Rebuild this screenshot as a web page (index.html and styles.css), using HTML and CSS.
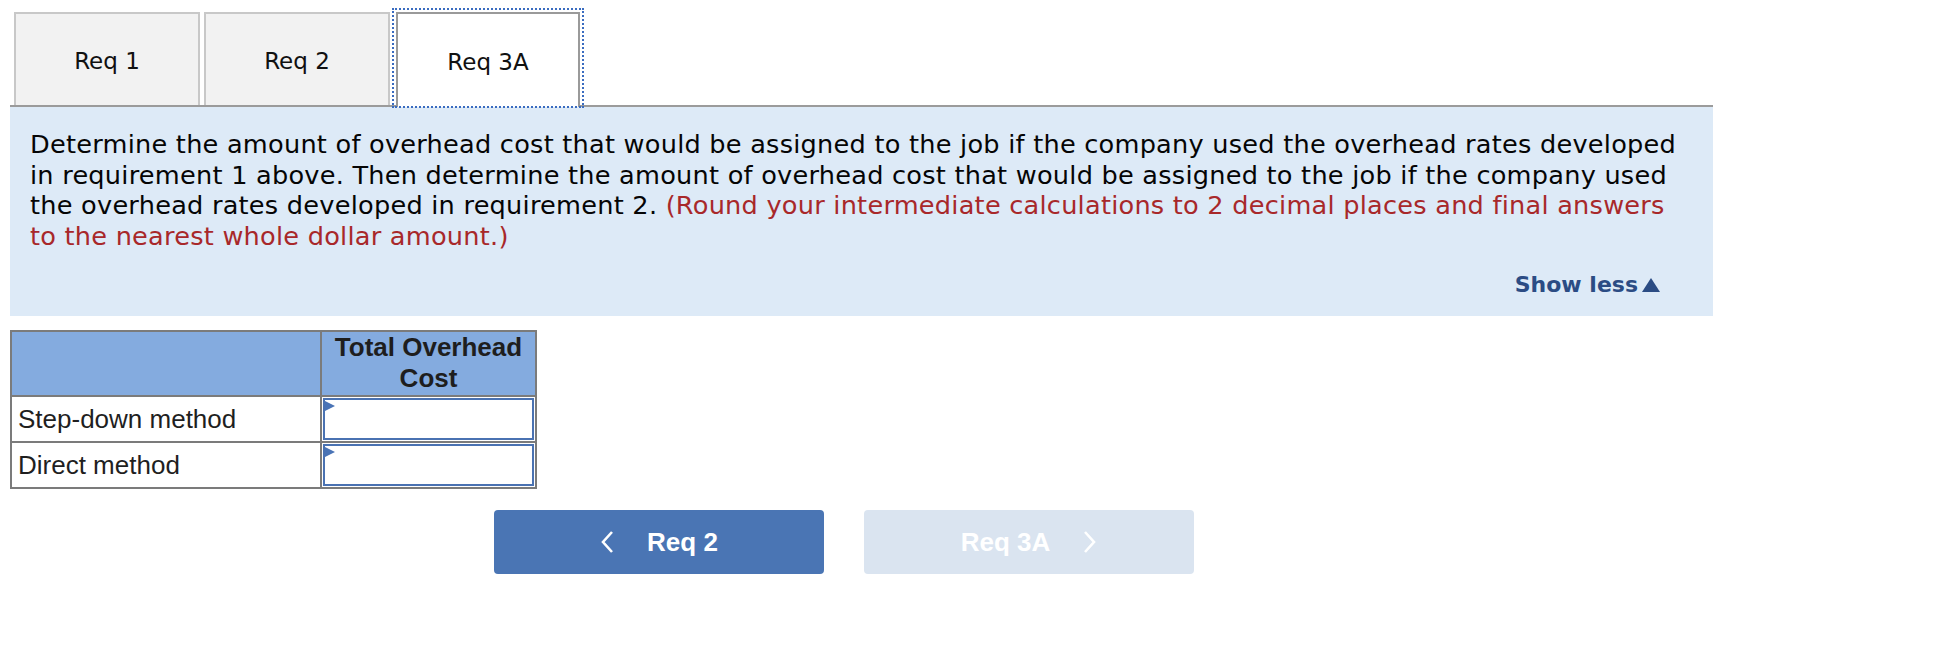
FILE: index.html
```html
<!DOCTYPE html>
<html lang="en">
<head>
<meta charset="utf-8">
<title>Req 3A</title>
<link rel="stylesheet" href="styles.css">
</head>
<body>
<div class="page">
  <div class="tabs">
    <div class="tab">Req 1</div>
    <div class="tab">Req 2</div>
    <div class="tab active">Req 3A</div>
  </div>
  <div class="panel">
    <p class="prompt">Determine the amount of overhead cost that would be assigned to the job if the company used the overhead rates developed in requirement 1 above. Then determine the amount of overhead cost that would be assigned to the job if the company used the overhead rates developed in requirement 2. <span class="note">(Round your intermediate calculations to 2 decimal places and final answers to the nearest whole dollar amount.)</span></p>
    <div class="toggle">
      <span class="show-less">Show less<svg class="tri" width="18" height="14" viewBox="0 0 18 14"><polygon points="9,0 18,14 0,14" fill="#2b4c84"/></svg></span>
    </div>
  </div>
  <table class="answer">
    <tr class="head">
      <th class="label-col"></th>
      <th class="value-col">Total Overhead<br>Cost</th>
    </tr>
    <tr>
      <td class="label">Step-down method</td>
      <td class="value"><div class="entry"><span class="flag"></span></div></td>
    </tr>
    <tr>
      <td class="label">Direct method</td>
      <td class="value"><div class="entry"><span class="flag"></span></div></td>
    </tr>
  </table>
  <div class="nav">
    <div class="nav-btn prev">
      <svg class="chev" width="14" height="24" viewBox="0 0 14 24"><polyline points="12,2 3,12 12,22" fill="none" stroke="#fff" stroke-width="2.6"/></svg>
      <span>Req 2</span>
    </div>
    <div class="nav-btn next">
      <span>Req 3A</span>
      <svg class="chev" width="14" height="24" viewBox="0 0 14 24"><polyline points="2,2 11,12 2,22" fill="none" stroke="#fff" stroke-width="2.6"/></svg>
    </div>
  </div>
</div>
</body>
</html>
```
FILE: styles.css
```css
body {
  margin: 0;
  background: #ffffff;
  font-family: "DejaVu Sans", Verdana, sans-serif;
  color: #000;
}

.page {
  width: 1703px;
  margin-left: 10px;
}

.tabs {
  display: flex;
  gap: 4px;
  padding: 12px 0 0 4px;
  border-bottom: 2px solid #9b9b9b;
  height: 93px;
}

.tab {
  box-sizing: border-box;
  width: 186px;
  height: 93px;
  border: 2px solid #c8c8c8;
  border-bottom: 0;
  background: #f2f2f2;
  display: flex;
  align-items: center;
  justify-content: center;
  font-size: 23px;
  color: #111;
  padding-top: 3px;
}

.tab.active {
  width: 184px;
  height: 95px;
  margin-left: 2px;
  background: #ffffff;
  border-color: #9a9a9a;
  position: relative;
}

.tab.active::after {
  content: "";
  position: absolute;
  left: -6px;
  right: -6px;
  top: -6px;
  bottom: -1px;
  border: 2px dotted #3a6cc0;
}

.panel {
  background: #ddeaf7;
  height: 209px;
  box-sizing: border-box;
  padding: 22px 20px 0 20px;
}

.prompt {
  margin: 0;
  font-size: 25.6px;
  line-height: 30.6px;
  letter-spacing: 0.24px;
  color: #050505;
}

.note {
  color: #a8282a;
}

.toggle {
  display: flex;
  justify-content: flex-end;
  margin-top: 21px;
  padding-right: 33px;
}

.show-less {
  font-weight: bold;
  font-size: 22px;
  line-height: 26px;
  color: #2b4c84;
  display: inline-flex;
  align-items: center;
}

.tri {
  margin-left: 4px;
}

.answer {
  margin-top: 14px;
  border-collapse: collapse;
  font-family: "Liberation Sans", Arial, sans-serif;
}

.answer th,
.answer td {
  border: 2px solid #7b7b7b;
  padding: 0;
}

.head th {
  background: #84abdf;
  height: 63px;
  font-weight: bold;
  font-size: 26px;
  line-height: 31px;
  color: #1e1e1e;
  vertical-align: top;
}

.label-col {
  width: 308px;
}

.value-col {
  width: 213px;
}

.label {
  height: 44px;
  font-size: 26px;
  color: #1f1f1f;
  padding-left: 6px !important;
}

.value {
  padding: 1px !important;
  vertical-align: top;
}

.entry {
  position: relative;
  box-sizing: border-box;
  height: 42px;
  border: 2px solid #4a72b2;
  background: #fff;
}

.flag {
  position: absolute;
  left: 0;
  top: 1px;
  width: 0;
  height: 0;
  border-top: 5px solid transparent;
  border-bottom: 5px solid transparent;
  border-left: 10px solid #4a74b6;
}

.nav {
  display: flex;
  gap: 40px;
  margin-top: 21px;
  padding-left: 484px;
}

.nav-btn {
  box-sizing: border-box;
  width: 330px;
  height: 64px;
  border-radius: 4px;
  display: flex;
  align-items: center;
  justify-content: center;
  gap: 33px;
  font-family: "Liberation Sans", Arial, sans-serif;
  font-weight: bold;
  font-size: 26px;
  color: #ffffff;
}

.prev {
  background: #4a75b4;
}

.next {
  background: #dae4f0;
}
```
